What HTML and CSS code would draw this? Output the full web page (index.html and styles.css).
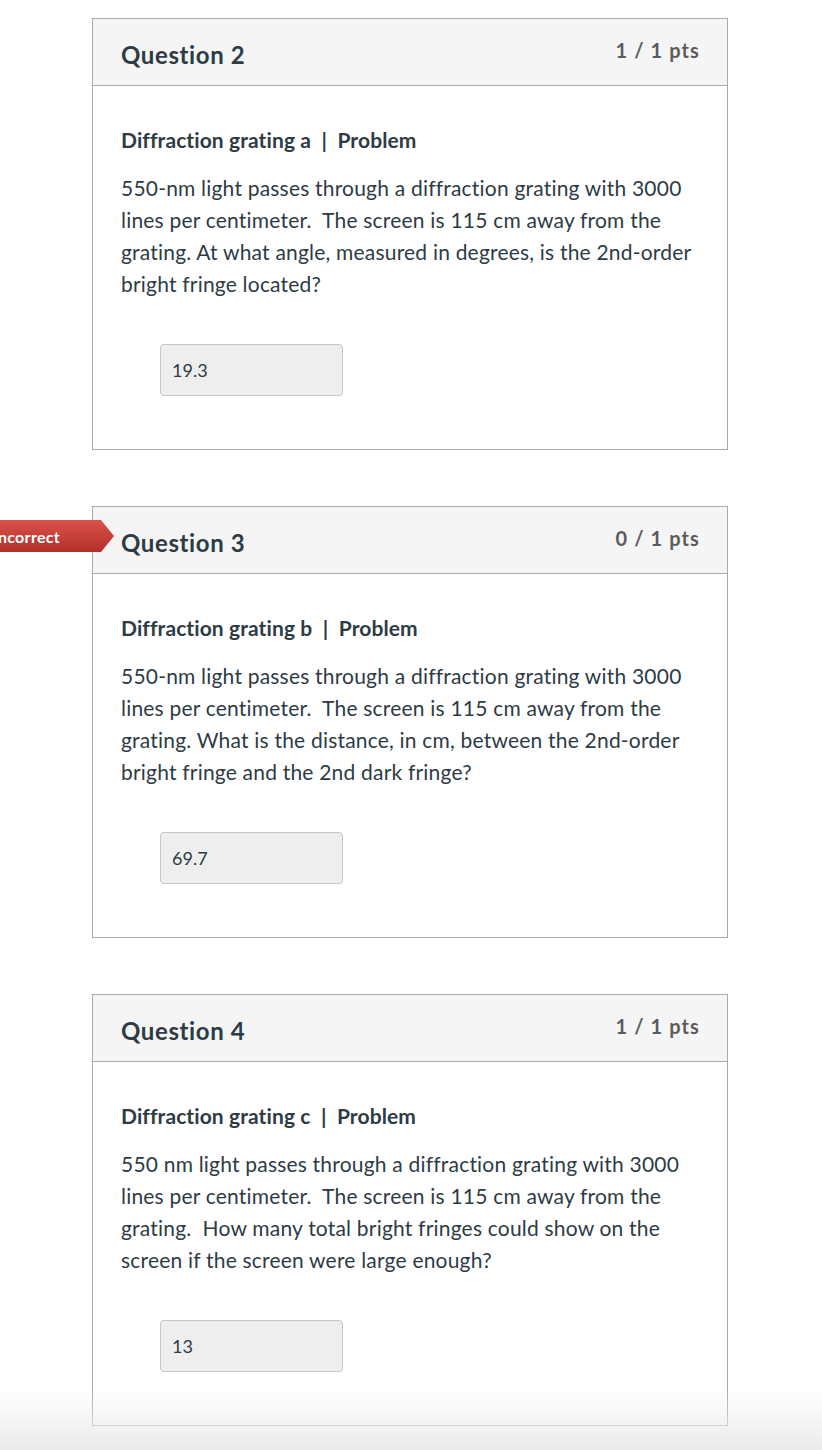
FILE: index.html
```html
<!DOCTYPE html>
<html lang="en">
<head>
<meta charset="utf-8">
<title>Quiz results</title>
<link rel="stylesheet" href="styles.css">
</head>
<body>
<main class="questions">
  <section class="card">
    <header class="card-head">
      <h2 class="q-name">Question 2</h2>
      <span class="q-pts">1 / 1 pts</span>
    </header>
    <div class="card-body">
      <p class="q-title">Diffraction grating a&nbsp; |&nbsp; Problem</p>
      <p class="q-text">550-nm light passes through a diffraction grating with 3000 lines per centimeter.&nbsp; The screen is 115 cm away from the grating. At what angle, measured in degrees, is the 2nd-order bright fringe located?</p>
      <div class="answer">19.3</div>
    </div>
  </section>

  <section class="card">
    <div class="badge">Incorrect</div>
    <header class="card-head">
      <h2 class="q-name">Question 3</h2>
      <span class="q-pts">0 / 1 pts</span>
    </header>
    <div class="card-body">
      <p class="q-title">Diffraction grating b&nbsp; |&nbsp; Problem</p>
      <p class="q-text">550-nm light passes through a diffraction grating with 3000 lines per centimeter.&nbsp; The screen is 115 cm away from the grating. What is the distance, in cm, between the 2nd-order bright fringe and the 2nd dark fringe?</p>
      <div class="answer">69.7</div>
    </div>
  </section>

  <section class="card">
    <header class="card-head">
      <h2 class="q-name">Question 4</h2>
      <span class="q-pts">1 / 1 pts</span>
    </header>
    <div class="card-body">
      <p class="q-title">Diffraction grating c&nbsp; |&nbsp; Problem</p>
      <p class="q-text">550 nm light passes through a diffraction grating with 3000 lines per centimeter.&nbsp; The screen is 115 cm away from the grating.&nbsp; How many total bright fringes could show on the screen if the screen were large enough?</p>
      <div class="answer">13</div>
    </div>
  </section>
</main>
<div class="fade"></div>
</body>
</html>
```

FILE: styles.css
```css
html, body {
  margin: 0;
  padding: 0;
  background: #fff;
}

body {
  font-family: Lato, "Open Sans", sans-serif;
  color: #2d3b45;
  overflow: hidden;
}

.questions {
  display: flex;
  flex-direction: column;
  gap: 56px;
  padding: 18px 0 0 92px;
}

.card {
  position: relative;
  width: 636px;
  box-sizing: border-box;
  border: 1px solid #aaaaaa;
  background: #fff;
}

.card-head {
  display: flex;
  justify-content: space-between;
  align-items: flex-start;
  height: 67px;
  box-sizing: border-box;
  padding: 0 27px 0 28px;
  background: #f5f5f5;
  border-bottom: 1px solid #aaaaaa;
}

.q-name {
  margin: 0;
  font-size: 24px;
  font-weight: 700;
  letter-spacing: 0.6px;
  line-height: 30px;
  padding-top: 21px;
}

.q-pts {
  font-size: 20px;
  font-weight: 700;
  letter-spacing: 1.1px;
  line-height: 26px;
  padding-top: 18px;
  color: #5a5c5f;
}

.card-body {
  padding: 38px 28px 53px 28px;
}

.q-title {
  margin: 0 0 16px 0;
  font-size: 21px;
  font-weight: 700;
  letter-spacing: 0.1px;
  line-height: 32px;
}

.q-text {
  margin: 0;
  font-size: 21px;
  font-weight: 400;
  letter-spacing: 0.2px;
  line-height: 32px;
  max-width: 575px;
}

.answer {
  margin: 44px 0 0 39px;
  width: 183px;
  height: 52px;
  box-sizing: border-box;
  padding: 0 11px;
  display: flex;
  align-items: center;
  background: #eeeeee;
  border: 1px solid #c7c7c7;
  border-radius: 4px;
  font-size: 18px;
  color: #2d3b45;
}

.badge {
  position: absolute;
  top: 13px;
  left: -100px;
  width: 121px;
  height: 32px;
  box-sizing: border-box;
  padding-left: 0;
  display: flex;
  align-items: center;
  color: #fff;
  font-size: 16px;
  font-weight: 700;
  letter-spacing: 0.3px;
  background: linear-gradient(#d8514a, #b3302a);
  clip-path: polygon(0 0, 108px 0, 121px 50%, 108px 100%, 0 100%);
}

.fade {
  position: fixed;
  left: 0;
  right: 0;
  bottom: 0;
  height: 62px;
  pointer-events: none;
  background: linear-gradient(rgba(235, 235, 235, 0), rgba(235, 235, 235, 1));
}
```
